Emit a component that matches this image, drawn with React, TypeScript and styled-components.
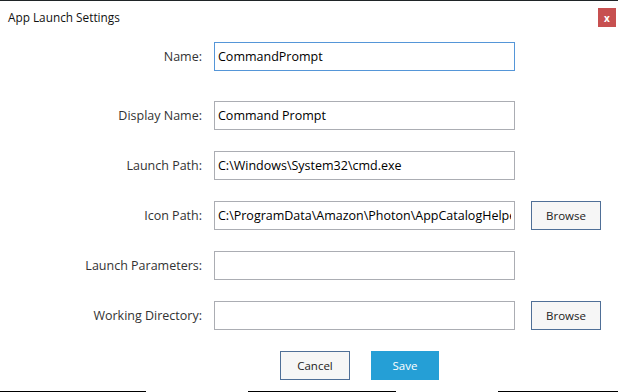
import React from 'react';
import styled, { createGlobalStyle } from 'styled-components';

const GlobalStyle = createGlobalStyle`
  html, body {
    margin: 0;
    padding: 0;
    background: #ffffff;
  }
  body {
    font-family: "Open Sans", "Noto Sans", sans-serif;
  }
`;

const Window = styled.div`
  width: 618px;
  height: 392px;
  box-sizing: border-box;
  border-top: 1px solid #1f2427;
  background: #ffffff;
  display: flex;
  flex-direction: column;
  overflow: hidden;
`;

const TitleBar = styled.div`
  display: flex;
  align-items: flex-start;
  justify-content: space-between;
  padding: 7px 2px 0 8px;
  height: 34px;
  box-sizing: border-box;
`;

const Title = styled.span`
  font-size: 11.8px;
  color: #111;
  line-height: 16px;
  padding-top: 1px;
`;

const CloseButton = styled.div`
  width: 18px;
  height: 19px;
  background: #c75050;
  color: #fff;
  font-size: 10px;
  font-weight: 700;
  display: flex;
  align-items: center;
  justify-content: center;
  line-height: 1;
`;

const Form = styled.div`
  display: flex;
  flex-direction: column;
  gap: 21px;
  padding-top: 7px;
`;

const Row = styled.div<{ $extra?: number }>`
  display: grid;
  grid-template-columns: 202px 301px 70px;
  column-gap: 12px;
  align-items: center;
  height: 29px;
  margin-bottom: ${(p) => p.$extra ?? 0}px;
`;

const Label = styled.label`
  text-align: right;
  font-size: 12.5px;
  color: #333;
`;

const Field = styled.div<{ $focused?: boolean }>`
  height: 29px;
  box-sizing: border-box;
  border: 1px solid ${(p) => (p.$focused ? '#5596d8' : '#abadb3')};
  display: flex;
  align-items: center;
  padding: 0 3px;
  min-width: 0;
  overflow: hidden;
`;

const FieldText = styled.span`
  display: block;
  width: 100%;
  font-size: 12.5px;
  color: #000;
  white-space: nowrap;
  overflow: hidden;
  text-overflow: clip;
`;

const Browse = styled.button`
  margin-left: 4px;
  width: 70px;
  height: 29px;
  box-sizing: border-box;
  border: 1px solid #4f6f97;
  background: #f6f6f6;
  font-family: inherit;
  font-size: 11.5px;
  color: #222;
  padding: 0;
`;

const Actions = styled.div`
  display: flex;
  gap: 21px;
  padding-left: 280px;
  margin-top: 21px;
`;

const ActionButton = styled.button<{ $primary?: boolean }>`
  width: ${(p) => (p.$primary ? 68 : 70)}px;
  height: 29px;
  box-sizing: border-box;
  border: ${(p) => (p.$primary ? '0' : '1px solid #4f6f97')};
  background: ${(p) => (p.$primary ? '#259fd6' : '#f6f6f6')};
  color: ${(p) => (p.$primary ? '#fff' : '#222')};
  font-family: inherit;
  font-size: 11.5px;
  padding: 0;
`;

const Shadow = styled.div`
  margin-top: auto;
  display: flex;
  height: 1px;
`;

const Seg = styled.div<{ $w: number; $dark?: boolean }>`
  width: ${(p) => p.$w}px;
  background: ${(p) => (p.$dark ? '#000' : 'transparent')};
`;

const rows = [
  { label: 'Name:', value: 'CommandPrompt', focused: true, extra: 9 },
  { label: 'Display Name:', value: 'Command Prompt' },
  { label: 'Launch Path:', value: 'C:\\Windows\\System32\\cmd.exe' },
  { label: 'Icon Path:', value: 'C:\\ProgramData\\Amazon\\Photon\\AppCatalogHelper', browse: true },
  { label: 'Launch Parameters:', value: '' },
  { label: 'Working Directory:', value: '', browse: true },
];

export default function App() {
  return (
    <>
      <GlobalStyle />
      <Window>
        <TitleBar>
          <Title>App Launch Settings</Title>
          <CloseButton>x</CloseButton>
        </TitleBar>
        <Form>
          {rows.map((r) => (
            <Row key={r.label} $extra={r.extra}>
              <Label>{r.label}</Label>
              <Field $focused={r.focused}>
                <FieldText>{r.value}</FieldText>
              </Field>
              {r.browse ? <Browse>Browse</Browse> : <span />}
            </Row>
          ))}
        </Form>
        <Actions>
          <ActionButton>Cancel</ActionButton>
          <ActionButton $primary>Save</ActionButton>
        </Actions>
        <Shadow>
          <Seg $w={146} $dark />
          <Seg $w={102} />
          <Seg $w={148} $dark />
          <Seg $w={102} />
          <Seg $w={120} $dark />
        </Shadow>
      </Window>
    </>
  );
}
